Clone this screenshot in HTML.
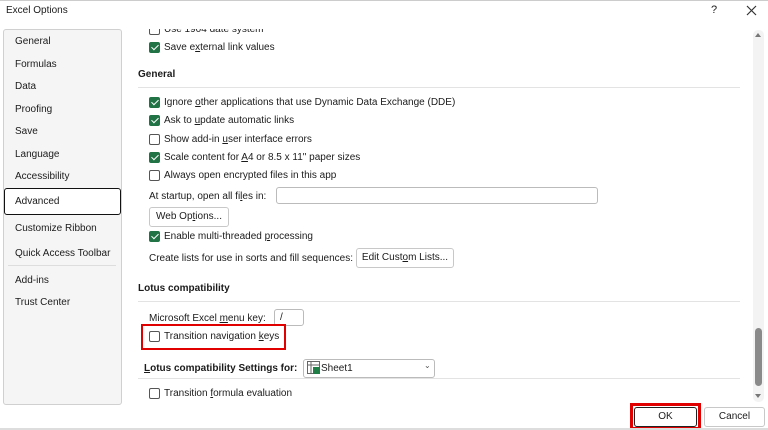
<!DOCTYPE html>
<html><head><meta charset="utf-8"><style>
*{margin:0;padding:0;box-sizing:border-box}
body{width:768px;height:430px;overflow:hidden;background:#fff;font-family:"Liberation Sans",sans-serif;font-size:10px;color:#1b1b1b;position:relative}
.a{position:absolute;white-space:nowrap}
.t{line-height:14px}
.cb{position:absolute;width:11px;height:11px;border:1px solid #555;border-radius:2px;background:#fff}
.cb.on{background:#217346;border-color:#217346}
.cb.on:after{content:"";position:absolute;left:3px;top:0px;width:3px;height:6px;border:solid #fff;border-width:0 1.5px 1.5px 0;transform:rotate(45deg)}
.btn{position:absolute;border:1px solid #c8c8c8;border-radius:3px;background:#fff;text-align:center;line-height:18px}
.line{position:absolute;height:1px;background:#e3e3e3;left:138px;width:602px}
.nav{position:absolute;left:15px;line-height:14px}
.b{font-weight:bold}
</style></head><body>
<div class="a" style="left:0;top:0;width:768px;height:1px;background:#ccc"></div>
<div class="a t" style="left:6px;top:4px">Excel Options</div>
<div class="a" style="left:711px;top:4px;font-size:11px">?</div>
<svg class="a" style="left:746px;top:5px" width="11" height="11"><path d="M1 1L10 10M10 1L1 10" stroke="#333" stroke-width="1.2"/></svg>
<div class="a" style="left:3px;top:29px;width:119px;height:376px;background:#f5f5f5;border:1px solid #d0d0d0;border-radius:3px"></div>
<div class="nav" style="top:35px">General</div>
<div class="nav" style="top:58px">Formulas</div>
<div class="nav" style="top:80px">Data</div>
<div class="nav" style="top:103px">Proofing</div>
<div class="nav" style="top:125px">Save</div>
<div class="nav" style="top:148px">Language</div>
<div class="nav" style="top:170px">Accessibility</div>
<div class="a" style="left:4px;top:188px;width:117px;height:27px;border:1.5px solid #111;border-radius:3px;background:#fff"></div>
<div class="nav" style="top:195px">Advanced</div>
<div class="nav" style="top:222px">Customize Ribbon</div>
<div class="nav" style="top:247px">Quick Access Toolbar</div>
<div class="a" style="left:8px;top:265px;width:108px;height:1px;background:#ddd"></div>
<div class="nav" style="top:274px">Add-ins</div>
<div class="nav" style="top:296px">Trust Center</div>

<div class="cb" style="left:149px;top:24px"></div><div class="a t" style="left:164px;top:23px">Use 1904 date system</div>
<div class="a" style="left:130px;top:20px;width:620px;height:9px;background:#fff"></div>
<div class="cb on" style="left:149px;top:42px"></div><div class="a t" style="left:164px;top:41px">Save e<u>x</u>ternal link values</div>
<div class="a t b" style="left:138px;top:68px">General</div>
<div class="line" style="top:87px"></div>
<div class="cb on" style="left:149px;top:97px"></div><div class="a t" style="left:164px;top:96px">Ignore <u>o</u>ther applications that use Dynamic Data Exchange (DDE)</div>
<div class="cb on" style="left:149px;top:115px"></div><div class="a t" style="left:164px;top:114px">Ask to <u>u</u>pdate automatic links</div>
<div class="cb" style="left:149px;top:134px"></div><div class="a t" style="left:164px;top:133px">Show add-in <u>u</u>ser interface errors</div>
<div class="cb on" style="left:149px;top:152px"></div><div class="a t" style="left:164px;top:151px">Scale content for <u>A</u>4 or 8.5 x 11" paper sizes</div>
<div class="cb" style="left:149px;top:170px"></div><div class="a t" style="left:164px;top:169px">Always open encrypted files in this app</div>
<div class="a t" style="left:149px;top:190px">At startup, open all fi<u>l</u>es in:</div>
<div class="a" style="left:276px;top:187px;width:322px;height:17px;border:1px solid #bbb;border-radius:3px"></div>
<div class="btn" style="left:149px;top:207px;width:80px;height:20px">Web Op<u>t</u>ions...</div>
<div class="cb on" style="left:149px;top:231px"></div><div class="a t" style="left:164px;top:230px">Enable multi-threaded <u>p</u>rocessing</div>
<div class="a t" style="left:149px;top:252px">Create lists for use in sorts and fill sequences:</div>
<div class="btn" style="left:356px;top:248px;width:98px;height:20px">Edit Cust<u>o</u>m Lists...</div>
<div class="a t b" style="left:138px;top:282px">Lotus compatibility</div>
<div class="line" style="top:301px"></div>
<div class="a t" style="left:149px;top:312px">Microsoft Excel <u>m</u>enu key:</div>
<div class="a" style="left:274px;top:309px;width:30px;height:17px;border:1px solid #bbb;border-radius:3px;padding-left:5px;line-height:15px">/</div>
<div class="cb" style="left:149px;top:331px"></div><div class="a t" style="left:164px;top:330px">Transition navigation <u>k</u>eys</div>
<div class="a" style="left:141px;top:324px;width:145px;height:26px;border:2.5px solid #e00000"></div>
<div class="a t b" style="left:144px;top:362px"><u>L</u>otus compatibility Settings for:</div>
<div class="a" style="left:303px;top:359px;width:132px;height:19px;border:1px solid #bbb;border-radius:3px"></div>
<svg class="a" style="left:307px;top:361px" width="14" height="14"><rect x="0.5" y="0.5" width="12" height="12" fill="#fff" stroke="#666"/><line x1="0" y1="4" x2="13" y2="4" stroke="#666"/><line x1="4" y1="0" x2="4" y2="13" stroke="#666"/><rect x="6" y="6" width="7" height="7" fill="#1e7e45"/></svg>
<div class="a t" style="left:321px;top:362px">Sheet1</div>
<div class="a" style="left:424px;top:361px;font-size:8px;color:#555">⌄</div>
<div class="line" style="top:378px"></div>
<div class="cb" style="left:149px;top:388px"></div><div class="a t" style="left:164px;top:387px">Transition <u>f</u>ormula evaluation</div>

<div class="a" style="left:753px;top:30px;width:11px;height:372px;background:#f3f3f3;border-radius:5px"></div>
<div class="a" style="left:755px;top:33px;width:0;height:0;border-left:3.5px solid transparent;border-right:3.5px solid transparent;border-bottom:4px solid #777"></div>
<div class="a" style="left:755px;top:394px;width:0;height:0;border-left:3.5px solid transparent;border-right:3.5px solid transparent;border-top:4px solid #777"></div>
<div class="a" style="left:755px;top:328px;width:7px;height:58px;background:#8a8a8a;border-radius:4px"></div>

<div class="btn" style="left:634px;top:407px;width:63px;height:20px;border-color:#222">OK</div>
<div class="a" style="left:630px;top:403px;width:71px;height:27px;border:3px solid #e00000"></div>
<div class="btn" style="left:704px;top:407px;width:61px;height:20px">Cancel</div>
<div class="a" style="left:0;top:428px;width:768px;height:2px;background:#ddd"></div>
</body></html>
